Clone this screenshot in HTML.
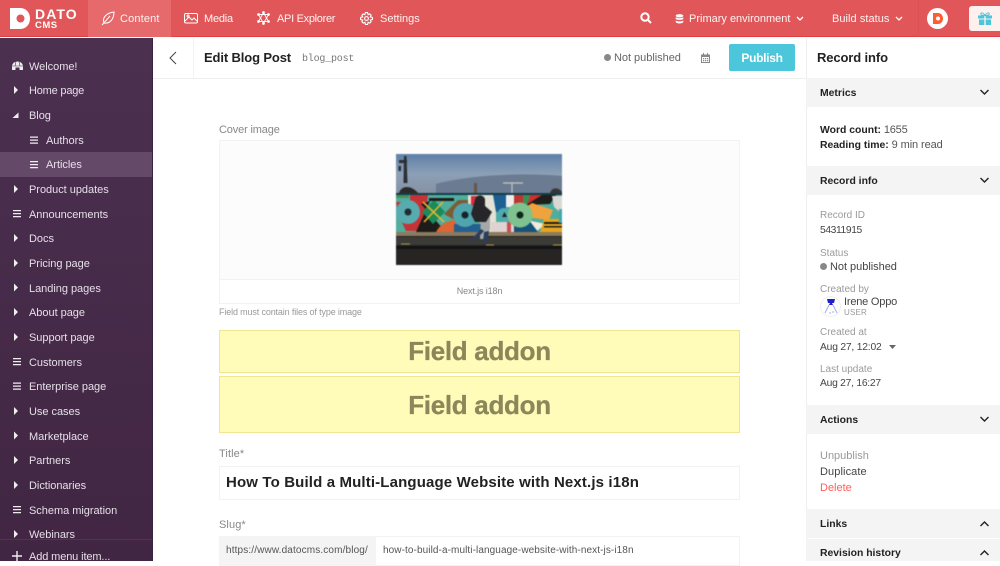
<!DOCTYPE html>
<html><head><meta charset="utf-8"><style>
*{box-sizing:border-box}
html,body{margin:0;padding:0;width:1000px;height:561px;overflow:hidden;background:#fff;font-family:"Liberation Sans",sans-serif}
.t{position:absolute;white-space:nowrap;line-height:14px;font-size:11px;letter-spacing:.2px}
.a{position:absolute}
svg{position:absolute;overflow:visible}
.n{color:#fff;font-size:11px;letter-spacing:.15px;opacity:.93}
.s{color:#e6dfe8;font-size:11px;letter-spacing:-.03px}
.g{color:#9a9a9a;font-size:10px;letter-spacing:0}
.d{color:#444;font-size:11px;letter-spacing:.1px}
.h{position:absolute;left:806px;width:194px;background:#f4f4f4}
.hb{color:#222;font-weight:bold;font-size:10.4px;letter-spacing:0}
</style></head><body>

<div class="a" style="left:0;top:0;width:1000px;height:37px;background:#e15759;border-bottom:1px solid #e03e42"></div>
<div class="a" style="left:88px;top:0;width:83px;height:37px;background:#e66a6b"></div>
<svg style="left:10px;top:8px" width="20" height="21" viewBox="0 0 20 21"><path fill="#fff" fill-rule="evenodd" d="M0 0H10C16 0 20 4.500 20 10.500S16 21 10 21H0ZM10.500 6.500A4 4 0 1 0 10.500 14.500 4 4 0 1 0 10.500 6.500Z"/></svg>
<div class="t" style="left:35px;top:7px;color:#fff;font-weight:bold;font-size:14px;letter-spacing:1.1px">DATO</div>
<div class="t" style="left:35px;top:19px;color:#fff;font-weight:bold;font-size:9.500px;letter-spacing:.5px">CMS</div>

<svg style="left:101px;top:11px" width="14" height="15" viewBox="0 0 14 15" fill="none" stroke="#fff" stroke-width="1"><path d="M1 14 9 5M3 12C1 7 5 2 13 1 13 8 9 13 3 12Z"/></svg>
<div class="t n" style="left:120px;top:12px">Content</div>
<svg style="left:184px;top:12px" width="14" height="12" viewBox="0 0 14 12" fill="none" stroke="#fff" stroke-width="1"><rect x=".5" y="1.500" width="13" height="9.500" rx="1.500"/><path d="M1 9 5 5 8 8 10 6 13 9"/><circle cx="4" cy="4" r="1"/></svg>
<div class="t n" style="left:204px;top:12px;letter-spacing:-.2px">Media</div>
<svg style="left:257px;top:11px" width="13" height="14" viewBox="0 0 13 14" fill="none" stroke="#fff" stroke-width=".9"><path d="M6.500 1.500 11.500 10.500H1.500ZM6.500 12.500 1.500 3.500H11.500Z"/><circle cx="6.500" cy="1.500" r=".9" fill="#fff"/><circle cx="6.500" cy="12.500" r=".9" fill="#fff"/><circle cx="1.500" cy="3.500" r=".9" fill="#fff"/><circle cx="11.500" cy="3.500" r=".9" fill="#fff"/><circle cx="1.500" cy="10.500" r=".9" fill="#fff"/><circle cx="11.500" cy="10.500" r=".9" fill="#fff"/></svg>
<div class="t n" style="left:277px;top:12px;letter-spacing:-.3px">API Explorer</div>
<svg style="left:360px;top:12px" width="13" height="13" viewBox="0 0 24 24" fill="none" stroke="#fff" stroke-width="2"><circle cx="12" cy="12" r="3.500"/><path d="M10 1H14L15 5 18 3.500 20.500 6 19 9 23 10V14L19 15 20.500 18 18 20.500 15 19 14 23H10L9 19 6 20.500 3.500 18 5 15 1 14V10L5 9 3.500 6 6 3.500 9 5Z"/></svg>
<div class="t n" style="left:380px;top:12px;letter-spacing:0">Settings</div>

<svg style="left:640px;top:12px" width="12" height="12" viewBox="0 0 12 12" fill="none" stroke="#fff" stroke-width="2"><circle cx="5" cy="5" r="3.700"/><path d="M8 8 11 11"/></svg>
<svg style="left:675px;top:14px" width="9" height="10" viewBox="0 0 9 10" fill="#fff"><ellipse cx="4.500" cy="1.800" rx="3.800" ry="1.700"/><path d="M.7 3.300C2 4.500 7 4.500 8.300 3.300V5C7 6.200 2 6.200 .7 5ZM.7 6.500C2 7.700 7 7.700 8.300 6.500V8C7 10 2 10 .7 8Z"/></svg>
<div class="t n" style="left:689px;top:12px;letter-spacing:0">Primary environment</div>
<svg style="left:796px;top:16px" width="8" height="5" viewBox="0 0 8 5" fill="none" stroke="#fff" stroke-width="1.300"><path d="M1 1 4 4 7 1"/></svg>
<div class="t n" style="left:832px;top:12px;letter-spacing:.05px">Build status</div>
<svg style="left:895px;top:16px" width="8" height="5" viewBox="0 0 8 5" fill="none" stroke="#fff" stroke-width="1.300"><path d="M1 1 4 4 7 1"/></svg>
<div class="a" style="left:918px;top:0;width:1px;height:37px;background:#dc5052"></div>
<div class="a" style="left:927px;top:8px;width:21px;height:21px;border-radius:50%;background:#fff"></div>
<svg style="left:933px;top:13px" width="10" height="11" viewBox="0 0 10 11"><path fill="#ff5c33" fill-rule="evenodd" d="M0 0H5C8 0 10 2.500 10 5.500S8 11 5 11H0ZM5 3.500A2 2 0 1 0 5 7.500 2 2 0 1 0 5 3.500Z"/></svg>
<div class="a" style="left:969px;top:6px;width:40px;height:25px;border-radius:3px;background:#fdf0ef"></div>
<svg style="left:978px;top:12px" width="14" height="14" viewBox="0 0 14 14" fill="#4dc5d8"><path d="M0 3.500H6.300V6.500H0ZM7.700 3.500H14V6.500H7.700ZM1 7.500H6.300V13H1ZM7.700 7.500H13V13H7.700Z"/><path fill="none" stroke="#4dc5d8" d="M7 3.500C5 0 2 .5 3 2.500 3.500 3.500 5 3.500 7 3.500 9 3.500 10.500 3.500 11 2.500 12 .5 9 0 7 3.500Z"/></svg>

<div class="a" style="left:0;top:38px;width:153px;height:523px;background:linear-gradient(#4c3050,#412643);border-right:1px solid #3a2340"></div>
<div class="a" style="left:0;top:152px;width:152px;height:25px;background:#644a68"></div>
<div class="a" style="left:0;top:539px;width:152px;height:1px;background:#4e3552"></div>

<svg style="left:12px;top:61px" width="11" height="10" viewBox="0 0 11 10" fill="#eee"><path d="M0 9V5.500C0 2.500 2.500.5 5.500.5S11 2.500 11 5.500V9H7.500V6.500H3.500V9Z"/><path stroke="#4c3050" stroke-width=".6" fill="none" d="M0 5H11M4 .5 3 5M7 .5 8 5"/></svg>
<div class="t s" style="left:29px;top:60px">Welcome!</div>

<svg style="left:0;top:0" width="153" height="561" fill="#eee">
<g><path d="M14 86V94L18 90ZM14 185V193L18 189ZM14 234V242L18 238ZM14 259V267L18 263ZM14 283.500V291.500L18 287.500ZM14 308V316L18 312ZM14 333V341L18 337ZM14 407V415L18 411ZM14 431.500V439.500L18 435.500ZM14 456V464L18 460ZM14 481V489L18 485ZM14 530V538L18 534Z"/><path d="M12.500 118H18.500V112.500Z"/></g>
<g><path d="M30 136.500H38V137.700H30ZM30 139.500H38V140.700H30ZM30 142.500H38V143.700H30Z"/><path d="M30 161H38V162.200H30ZM30 164H38V165.200H30ZM30 167H38V168.200H30Z"/>
<path d="M13 210H21V211.200H13ZM13 213H21V214.200H13ZM13 216H21V217.200H13Z"/><path d="M13 358H21V359.200H13ZM13 361H21V362.200H13ZM13 364H21V365.200H13Z"/><path d="M13 382.500H21V383.700H13ZM13 385.500H21V386.700H13ZM13 388.500H21V389.700H13Z"/><path d="M13 506H21V507.200H13ZM13 509H21V510.200H13ZM13 512H21V513.200H13Z"/></g>
<path d="M16.300 551H17.700V555.300H22V556.700H17.700V561H16.300V556.700H12V555.300H16.300Z"/>
</svg>
<div class="t s" style="left:29px;top:84px;letter-spacing:-.2px">Home page</div>
<div class="t s" style="left:29px;top:109px">Blog</div>
<div class="t s" style="left:46px;top:134px">Authors</div>
<div class="t s" style="left:46px;top:158px">Articles</div>
<div class="t s" style="left:29px;top:183px">Product updates</div>
<div class="t s" style="left:29px;top:208px">Announcements</div>
<div class="t s" style="left:29px;top:232px">Docs</div>
<div class="t s" style="left:29px;top:257px">Pricing page</div>
<div class="t s" style="left:29px;top:282px">Landing pages</div>
<div class="t s" style="left:29px;top:306px">About page</div>
<div class="t s" style="left:29px;top:331px">Support page</div>
<div class="t s" style="left:29px;top:356px">Customers</div>
<div class="t s" style="left:29px;top:380px">Enterprise page</div>
<div class="t s" style="left:29px;top:405px">Use cases</div>
<div class="t s" style="left:29px;top:430px">Marketplace</div>
<div class="t s" style="left:29px;top:454px">Partners</div>
<div class="t s" style="left:29px;top:479px">Dictionaries</div>
<div class="t s" style="left:29px;top:504px">Schema migration</div>
<div class="t s" style="left:29px;top:528px">Webinars</div>
<div class="t s" style="left:29px;top:550px;letter-spacing:-.12px">Add menu item...</div>

<div class="a" style="left:153px;top:78px;width:653px;height:1px;background:#eee"></div>
<div class="a" style="left:193px;top:38px;width:1px;height:40px;background:#f2f2f2"></div>
<div class="a" style="left:806px;top:38px;width:1px;height:523px;background:#eee"></div>
<svg style="left:169px;top:51px" width="8" height="14" viewBox="0 0 8 14" fill="none" stroke="#444" stroke-width="1"><path d="M7 1 1 7 7 13"/></svg>
<div class="t" style="left:204px;top:51px;color:#222;font-size:13px;font-weight:bold;letter-spacing:-.13px">Edit Blog Post</div>
<div class="t" style="left:302px;top:53px;color:#777;font-family:'Liberation Mono',monospace;font-size:10px;letter-spacing:-.2px">blog_post</div>
<div class="a" style="left:604px;top:54px;width:7px;height:7px;border-radius:50%;background:#888"></div>
<div class="t" style="left:614px;top:51px;color:#666;letter-spacing:-.03px">Not published</div>
<svg style="left:701px;top:53px" width="9" height="10" viewBox="0 0 9 10" fill="#888"><path d="M0 1.500H2V0H3V1.500H6V0H7V1.500H9V10H0ZM1 4V9H8V4Z"/><path d="M2 5H3.200V6.200H2ZM4 5H5.200V6.200H4ZM6 5H7.200V6.200H6ZM2 7H3.200V8.200H2ZM4 7H5.200V8.200H4ZM6 7H7.200V8.200H6Z"/></svg>
<div class="a" style="left:729px;top:44px;width:66px;height:27px;border-radius:2px;background:#4cc6da"></div>
<div class="t" style="left:729px;top:51px;width:66px;text-align:center;color:#fff;font-weight:bold;font-size:12px;letter-spacing:-.3px">Publish</div>

<div class="t" style="left:219px;top:123px;color:#888;font-size:11px;letter-spacing:-.15px">Cover image</div>
<div class="a" style="left:219px;top:140px;width:521px;height:164px;background:#fcfcfc;border:1px solid #f2f2f2"></div>
<div class="a" style="left:219px;top:279px;width:521px;height:25px;background:#fff;border:1px solid #f2f2f2"></div>
<div class="t" style="left:219px;top:285px;width:521px;text-align:center;color:#888;font-size:9px;line-height:13px;letter-spacing:-.12px">Next.js i18n</div>
<div class="t" style="left:219px;top:306px;color:#999;font-size:9px;line-height:13px;letter-spacing:-.14px">Field must contain files of type image</div>

<svg style="left:396px;top:154px;filter:blur(.45px)" width="166" height="111" viewBox="0 0 166 111">
<defs><linearGradient id="sky" x1="0" y1="0" x2="0" y2="1"><stop offset="0" stop-color="#5e7fa8"/><stop offset=".5" stop-color="#8ca0b6"/><stop offset="1" stop-color="#8791a2"/></linearGradient></defs>
<rect width="166" height="40" fill="url(#sky)"/>
<path d="M40 30C70 22 120 18 166 22V40H40Z" fill="#6a7b92"/>
<path d="M3 39 C5 32 14 30 22 39Z" fill="#2b2a2a"/><path d="M154 39C156 33 162 33 166 38V39Z" fill="#3a3433"/>
<path d="M8 2H10.500L11.500 29H7.500ZM3 6H11V9H3ZM2.500 12H5V17H2.500Z" fill="#2c2e32"/><path d="M78 29H81V39H78Z" fill="#6a5548"/><path d="M107 29H127M116 29V39" stroke="#c8c6c2" stroke-width="1.200" fill="none"/>
<rect y="39" width="166" height="40" fill="#4fae9d"/><rect y="39" width="166" height="2" fill="#123e48"/>
<path d="M14 41H32L30 55 34 70 26 77H10L3 62 0 48H14Z" fill="#c63235"/><path d="M0 41H13V44H0Z" fill="#4d8e5b"/>
<path d="M25 50 50 78H20L34 47Z" fill="#1d1c18"/><path d="M26 58 38 46 49 58 37 70Z" fill="#1b8b5b"/><path d="M27 48 48 68M47 48 28 68" stroke="#e5b82b" stroke-width="1.600"/>
<path d="M33 44H58V47H33Z" fill="#1d1d1a"/><path d="M40 78C46 66 60 64 74 66V78Z" fill="#dd6635"/><path d="M48 60 62 46H85V59L66 70Z" fill="#7f5a36"/>
<path d="M72 41H100V80H86V70L72 60Z" fill="#e4e2d5"/><path d="M75 42H85V52H75Z" fill="#d2313c"/><path d="M97 41H110V58H100Z" fill="#1d5f93"/><path d="M110 41H118V53H110Z" fill="#eee"/><path d="M118 41H127V56H118Z" fill="#c1332e"/><path d="M127 41H134V56H127Z" fill="#3f8d52"/><path d="M134 41H146L135 65H128Z" fill="#cd2f2f"/>
<path d="M146 41H160L154 50 130 51Z" fill="#1f1e1b"/><path d="M125 57 136 49 157 56 153 66 137 64Z" fill="#f0a33d"/><path d="M130 66 150 70 138 79H118Z" fill="#f1ebde"/><path d="M118 68 130 62 142 78H111Z" fill="#165379"/><path d="M148 65H166V79H144Z" fill="#e7a620"/><path d="M148 68H166V70H148ZM148 72H166V73.500H148Z" fill="#1e1e1b"/><path d="M156 42H166V60L158 53Z" fill="#dad8d5"/><path d="M163 55H166V69H163Z" fill="#45a7ae"/>
<path d="M95 68H118V78H95Z" fill="#ded3d1"/><path d="M111 68H115V78H111Z" fill="#cc4d50"/><path d="M58 70H88V78H58Z" fill="#245f8f"/>
<circle cx="12" cy="58" r="12" fill="#58abaf"/><circle cx="12" cy="58" r="3.500" fill="#1f2d2e"/>
<circle cx="69" cy="61" r="12" fill="#4fa5ad"/><circle cx="69" cy="61" r="3.500" fill="#16242a"/>
<circle cx="108" cy="61" r="7" fill="#4fa9ae"/><path d="M106 63H111L108.500 58Z" fill="#18251f"/>
<circle cx="124" cy="61" r="12.500" fill="#7fc18f"/><circle cx="124" cy="61" r="3.500" fill="#12251c"/>
<rect y="78" width="166" height="4" fill="#8b7a5d"/><rect y="82" width="166" height="29" fill="#262524"/><rect y="83" width="166" height="8" fill="#3b3b38"/><rect y="92" width="166" height="3" fill="#131312"/>
<path d="M5 90H14M90 91H98M157 91H166" stroke="#b19643" stroke-width="1"/>
<path d="M85 58H94L94 75 90 85H84Z" fill="#a4a8a9"/><path d="M85 75 75 86 78 88 88 77ZM88 78 87 88 91 89 93 77Z" fill="#2b3e5a"/><path d="M79 46C80 40 87 40 89 45V52L96 58 90 68 79 68 75 60Z" fill="#26252a"/>
</svg>

<div class="a" style="left:219px;top:330px;width:521px;height:43px;background:#fffbb8;border:1px solid #f2e58f"></div>
<div class="a" style="left:219px;top:376px;width:521px;height:57px;background:#fffbb8;border:1px solid #f2e58f"></div>
<div class="t" style="left:219px;top:336px;width:521px;text-align:center;color:#8c875a;font-size:26px;font-weight:bold;line-height:30px;letter-spacing:-.3px;-webkit-text-stroke:.3px #8c875a">Field addon</div>
<div class="t" style="left:219px;top:390px;width:521px;text-align:center;color:#8c875a;font-size:26px;font-weight:bold;line-height:30px;letter-spacing:-.3px;-webkit-text-stroke:.3px #8c875a">Field addon</div>

<div class="t" style="left:219px;top:447px;color:#888;letter-spacing:.1px">Title*</div>
<div class="a" style="left:219px;top:466px;width:521px;height:34px;background:#fff;border:1px solid #f2f2f2"></div>
<div class="t" style="left:226px;top:474px;color:#222;font-size:15px;line-height:18px;font-weight:bold;letter-spacing:.14px">How To Build a Multi-Language Website with Next.js i18n</div>
<div class="t" style="left:219px;top:518px;color:#888;letter-spacing:.1px">Slug*</div>
<div class="a" style="left:219px;top:536px;width:521px;height:30px;background:#fff;border:1px solid #f2f2f2"></div>
<div class="a" style="left:219px;top:536px;width:157px;height:30px;background:#f4f4f4"></div>
<div class="t" style="left:226px;top:544px;color:#555;font-size:10px;letter-spacing:.14px">https://www.datocms.com/blog/</div>
<div class="t" style="left:383px;top:544px;color:#555;font-size:10px;letter-spacing:.09px">how-to-build-a-multi-language-website-with-next-js-i18n</div>

<div class="t" style="left:817px;top:51px;color:#222;font-size:13px;font-weight:bold;letter-spacing:-.12px">Record info</div>
<div class="h" style="top:78px;height:29px"></div>
<div class="t hb" style="left:820px;top:87px">Metrics</div>
<div class="h" style="top:166px;height:29px"></div>
<div class="t hb" style="left:820px;top:175px">Record info</div>
<div class="h" style="top:405px;height:29px"></div>
<div class="t hb" style="left:820px;top:414px">Actions</div>
<div class="h" style="top:509px;height:29px"></div>
<div class="t hb" style="left:820px;top:518px">Links</div>
<div class="h" style="top:539px;height:22px"></div>
<div class="t hb" style="left:820px;top:547px">Revision history</div>
<svg style="left:980px;top:0" width="9" height="561" fill="none" stroke="#222" stroke-width="1.400"><path d="M.5 90 4.500 94 8.500 90M.5 178 4.500 182 8.500 178M.5 417 4.500 421 8.500 417M.5 526 4.500 522 8.500 526M.5 555 4.500 551 8.500 555"/></svg>

<div class="t d" style="left:820px;top:123px;color:#555;letter-spacing:-.2px"><b style="color:#222;font-size:10.400px;letter-spacing:0">Word count:</b> 1655</div>
<div class="t d" style="left:820px;top:138px;color:#555;letter-spacing:-.1px"><b style="color:#222;font-size:10.400px;letter-spacing:0">Reading time:</b> 9 min read</div>
<div class="t g" style="left:820px;top:209px">Record ID</div>
<div class="t d" style="left:820px;top:224px;font-size:10.300px;letter-spacing:-.4px">54311915</div>
<div class="t g" style="left:820px;top:247px">Status</div>
<div class="a" style="left:820px;top:263px;width:7px;height:7px;border-radius:50%;background:#888"></div>
<div class="t d" style="left:830px;top:260px;letter-spacing:-.03px">Not published</div>
<div class="t g" style="left:820px;top:283px">Created by</div>
<div class="a" style="left:820px;top:296px;width:21px;height:21px;border-radius:50%;background:#fff;border:1px solid #eee"></div>
<svg style="left:824px;top:298px" width="14" height="17" viewBox="0 0 14 17" fill="none"><path d="M3 1H11L10 5H8L9 7H5L6 5H4Z" fill="#1f1fd0"/><path d="M5 7 1 15M9 7 13 15M6 14V16M9 13V15" stroke="#a9a9ee"/></svg>
<div class="t d" style="left:844px;top:295px;letter-spacing:-.2px">Irene Oppo</div>
<div class="t" style="left:844px;top:306px;color:#999;font-size:8px;letter-spacing:.2px">USER</div>
<div class="t g" style="left:820px;top:326px">Created at</div>
<div class="t d" style="left:820px;top:341px;font-size:10.300px;letter-spacing:-.2px">Aug 27, 12:02</div>
<svg style="left:889px;top:345px" width="7" height="4" viewBox="0 0 7 4" fill="#666"><path d="M0 0H7L3.500 4Z"/></svg>
<div class="t g" style="left:820px;top:363px">Last update</div>
<div class="t d" style="left:820px;top:377px;font-size:10.300px;letter-spacing:-.25px">Aug 27, 16:27</div>
<div class="t" style="left:820px;top:449px;color:#999;letter-spacing:0">Unpublish</div>
<div class="t d" style="left:820px;top:465px">Duplicate</div>
<div class="t" style="left:820px;top:481px;color:#ff5f57;letter-spacing:0">Delete</div>
</body></html>
